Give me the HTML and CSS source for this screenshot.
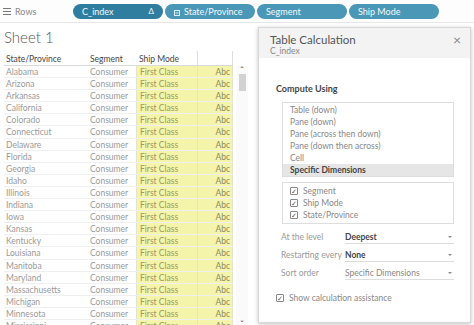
FILE: index.html
```html
<!DOCTYPE html>
<html lang="en">
<head>
  <meta charset="UTF-8">
  <title>Sheet 1</title>
  <link rel="stylesheet" href="styles.css">
</head>
<body>

  <div class="topbar">
    <div class="shelf-label">
      <svg width="8" height="7" viewBox="0 0 8 7"><path d="M0 .5h8M0 3.5h8M0 6.5h8" stroke="#777" stroke-width="1"/></svg>
      Rows
    </div>
    <div class="pill pill-calc"><span>C_index</span><span class="delta">&#916;</span></div>
    <div class="pill"><span><svg class="pill-icon" width="6" height="6" viewBox="0 0 6 6"><rect x=".5" y=".5" width="5" height="5" fill="none" stroke="#dceef5"/><path d="M1.5 3h3" stroke="#dceef5"/></svg>State/Province</span></div>
    <div class="pill"><span>Segment</span></div>
    <div class="pill pill-last"><span>Ship Mode</span></div>
  </div>

  <div class="main">
    <div class="sheet">
      <div class="sheet-title">Sheet 1</div>
      <div class="table-wrap">
        <div class="table">
          <div class="row head">
            <div class="c1">State/Province</div>
            <div class="c2">Segment</div>
            <div class="c3">Ship Mode</div>
            <div class="c4"></div>
          </div>
          <div class="row"><div class="c1">Alabama</div><div class="c2">Consumer</div><div class="c3">First Class</div><div class="c4">Abc</div></div>
          <div class="row"><div class="c1">Arizona</div><div class="c2">Consumer</div><div class="c3">First Class</div><div class="c4">Abc</div></div>
          <div class="row"><div class="c1">Arkansas</div><div class="c2">Consumer</div><div class="c3">First Class</div><div class="c4">Abc</div></div>
          <div class="row"><div class="c1">California</div><div class="c2">Consumer</div><div class="c3">First Class</div><div class="c4">Abc</div></div>
          <div class="row"><div class="c1">Colorado</div><div class="c2">Consumer</div><div class="c3">First Class</div><div class="c4">Abc</div></div>
          <div class="row"><div class="c1">Connecticut</div><div class="c2">Consumer</div><div class="c3">First Class</div><div class="c4">Abc</div></div>
          <div class="row"><div class="c1">Delaware</div><div class="c2">Consumer</div><div class="c3">First Class</div><div class="c4">Abc</div></div>
          <div class="row"><div class="c1">Florida</div><div class="c2">Consumer</div><div class="c3">First Class</div><div class="c4">Abc</div></div>
          <div class="row"><div class="c1">Georgia</div><div class="c2">Consumer</div><div class="c3">First Class</div><div class="c4">Abc</div></div>
          <div class="row"><div class="c1">Idaho</div><div class="c2">Consumer</div><div class="c3">First Class</div><div class="c4">Abc</div></div>
          <div class="row"><div class="c1">Illinois</div><div class="c2">Consumer</div><div class="c3">First Class</div><div class="c4">Abc</div></div>
          <div class="row"><div class="c1">Indiana</div><div class="c2">Consumer</div><div class="c3">First Class</div><div class="c4">Abc</div></div>
          <div class="row"><div class="c1">Iowa</div><div class="c2">Consumer</div><div class="c3">First Class</div><div class="c4">Abc</div></div>
          <div class="row"><div class="c1">Kansas</div><div class="c2">Consumer</div><div class="c3">First Class</div><div class="c4">Abc</div></div>
          <div class="row"><div class="c1">Kentucky</div><div class="c2">Consumer</div><div class="c3">First Class</div><div class="c4">Abc</div></div>
          <div class="row"><div class="c1">Louisiana</div><div class="c2">Consumer</div><div class="c3">First Class</div><div class="c4">Abc</div></div>
          <div class="row"><div class="c1">Manitoba</div><div class="c2">Consumer</div><div class="c3">First Class</div><div class="c4">Abc</div></div>
          <div class="row"><div class="c1">Maryland</div><div class="c2">Consumer</div><div class="c3">First Class</div><div class="c4">Abc</div></div>
          <div class="row"><div class="c1">Massachusetts</div><div class="c2">Consumer</div><div class="c3">First Class</div><div class="c4">Abc</div></div>
          <div class="row"><div class="c1">Michigan</div><div class="c2">Consumer</div><div class="c3">First Class</div><div class="c4">Abc</div></div>
          <div class="row"><div class="c1">Minnesota</div><div class="c2">Consumer</div><div class="c3">First Class</div><div class="c4">Abc</div></div>
          <div class="row"><div class="c1">Mississippi</div><div class="c2">Consumer</div><div class="c3">First Class</div><div class="c4">Abc</div></div>
        </div>
        <div class="scrollbar">
          <span class="arrow">&#710;</span>
          <div class="thumb"></div>
          <span class="arrow arrow-down">&#711;</span>
        </div>
      </div>
    </div>

    <div class="panel">
      <div class="panel-head">
        <div>
          <div class="panel-title">Table Calculation</div>
          <div class="panel-sub">C_index</div>
        </div>
        <div class="close">&#215;</div>
      </div>
      <div class="panel-body">
        <div class="section-title">Compute Using</div>
        <div class="listbox">
          <div class="item">Table (down)</div>
          <div class="item">Pane (down)</div>
          <div class="item">Pane (across then down)</div>
          <div class="item">Pane (down then across)</div>
          <div class="item">Cell</div>
          <div class="item selected">Specific Dimensions</div>
        </div>
        <div class="listbox dims">
          <div class="check-item"><span class="box">&#10003;</span>Segment</div>
          <div class="check-item"><span class="box">&#10003;</span>Ship Mode</div>
          <div class="check-item"><span class="box">&#10003;</span>State/Province</div>
        </div>
        <div class="fields">
          <div class="field">
            <div class="field-label">At the level</div>
            <div class="select bold"><span>Deepest</span><span class="caret"></span></div>
          </div>
          <div class="field">
            <div class="field-label">Restarting every</div>
            <div class="select bold"><span>None</span><span class="caret"></span></div>
          </div>
          <div class="field">
            <div class="field-label">Sort order</div>
            <div class="select"><span>Specific Dimensions</span><span class="caret"></span></div>
          </div>
        </div>
        <div class="check-item assist"><span class="box">&#10003;</span>Show calculation assistance</div>
      </div>
    </div>
  </div>

</body>
</html>
```

FILE: styles.css
```css
* { margin: 0; padding: 0; box-sizing: border-box; }
html, body {
  width: 474px;
  height: 325px;
  overflow: hidden;
  background: #fff;
  font-family: 'Lato', 'Open Sans', sans-serif;
  color: #555;
}

/* rows shelf */
.topbar {
  height: 23px;
  display: flex;
  align-items: center;
  padding-left: 3px;
  border-bottom: 1px solid #e6e6e6;
  background: #fdfdfd;
}
.shelf-label {
  width: 70px;
  display: flex;
  align-items: center;
  gap: 4px;
  font-size: 9px;
  color: #888;
}
.pill {
  width: 90px;
  height: 15px;
  margin-right: 2px;
  padding: 0 9px;
  border-radius: 8px;
  background: #4a97b8;
  color: #f4f9fb;
  font-size: 9px;
  display: flex;
  align-items: center;
  justify-content: space-between;
}
.pill-calc { background: #2f7e9f; }
.pill-icon { margin-right: 4px; vertical-align: -1px; }
.delta { font-size: 8px; }

.main {
  display: flex;
}

/* sheet */
.sheet {
  width: 255px;
  padding-left: 4px;
}
.sheet-title {
  height: 28px;
  padding-top: 5px;
  font-size: 15px;
  font-weight: 300;
  color: #555;
}
.table-wrap {
  display: flex;
}
.table {
  width: 229px;
}
.row {
  display: grid;
  grid-template-columns: 81px 51px 61px 36px;
  height: 12.1px;
  line-height: 12px;
  font-size: 8.5px;
  color: #9a9a9a;
  border-bottom: 1px solid #efefef;
}
.row > div {
  white-space: nowrap;
  overflow: hidden;
}
.c1 { padding-left: 2px; }
.c2 { padding-left: 5px; }
.c3 {
  padding-left: 3px;
  background: #f4f4aa;
  color: #9a9a60;
  border-left: 1px solid #e4e4cc;
}
.c4 {
  text-align: right;
  padding-right: 2px;
  background: #f4f4aa;
  color: #8a8a60;
  border-left: 1px solid #e4e4cc;
  border-right: 1px solid #e4e4cc;
}
.row.head {
  height: 15px;
  line-height: 16px;
  color: #444;
  border-bottom: 1px solid #d9d9d9;
}
.row.head .c3 {
  background: none;
  color: #444;
  border-left: none;
}
.row.head .c4 {
  background: none;
  border-left: 1px solid #ddd;
  border-right: 1px solid #ddd;
}

.scrollbar {
  width: 12px;
  margin-left: 3px;
  margin-top: 15px;
  height: 260px;
  display: flex;
  flex-direction: column;
  align-items: center;
  background: #fafafa;
}
.arrow {
  font-size: 10px;
  line-height: 8px;
  height: 6px;
  color: #666;
}
.arrow-down { margin-top: auto; }
.thumb {
  width: 7px;
  height: 17px;
  margin-top: 2px;
  background: #d2d2d2;
}

/* table calculation dialog */
.panel {
  width: 213px;
  height: 296px;
  margin-top: 4px;
  margin-left: 3px;
  border: 1px solid #d8d8d8;
  box-shadow: 0 1px 4px rgba(0, 0, 0, 0.25);
  background: #fff;
  display: flex;
  flex-direction: column;
}
.panel-head {
  height: 30px;
  padding: 5px 9px 0 11px;
  background: #f3f3f3;
  display: flex;
  justify-content: space-between;
}
.panel-title {
  font-size: 11.5px;
  color: #555;
  line-height: 13px;
}
.panel-sub {
  font-size: 8.5px;
  color: #888;
  line-height: 10px;
}
.close {
  font-size: 14px;
  color: #888;
  line-height: 14px;
}
.panel-body {
  padding: 0 16px 0 17px;
}
.section-title {
  margin-top: 25px;
  height: 19px;
  font-size: 9px;
  font-weight: 700;
  color: #444;
}
.listbox {
  margin-left: 6px;
  border: 1px solid #ddd;
  padding-top: 1px;
}
.item {
  height: 12px;
  line-height: 12px;
  padding-left: 7px;
  font-size: 8.5px;
  color: #888;
}
.item.selected {
  background: #e6e6e6;
  font-weight: 700;
  color: #444;
}
.dims {
  margin-top: 5px;
  padding: 2px 0 2px 7px;
}
.check-item {
  height: 12px;
  display: flex;
  align-items: center;
  gap: 5px;
  font-size: 8.5px;
  color: #888;
}
.box {
  width: 8px;
  height: 8px;
  border: 1px solid #888;
  border-radius: 1px;
  font-size: 7px;
  line-height: 7px;
  text-align: center;
  color: #555;
}
.fields {
  margin-top: 2px;
}
.field {
  display: flex;
  align-items: flex-end;
  height: 18px;
  margin-left: 5px;
  font-size: 8.5px;
}
.field-label {
  width: 64px;
  color: #999;
  line-height: 14px;
}
.select {
  flex: 1;
  display: flex;
  justify-content: space-between;
  align-items: center;
  height: 14px;
  border-bottom: 1px solid #ddd;
  color: #888;
}
.select.bold span:first-child {
  font-weight: 700;
  color: #444;
}
.caret {
  width: 0;
  height: 0;
  margin-right: 2px;
  border-left: 2px solid transparent;
  border-right: 2px solid transparent;
  border-top: 2px solid #888;
}
.assist {
  margin-top: 12px;
}
```
